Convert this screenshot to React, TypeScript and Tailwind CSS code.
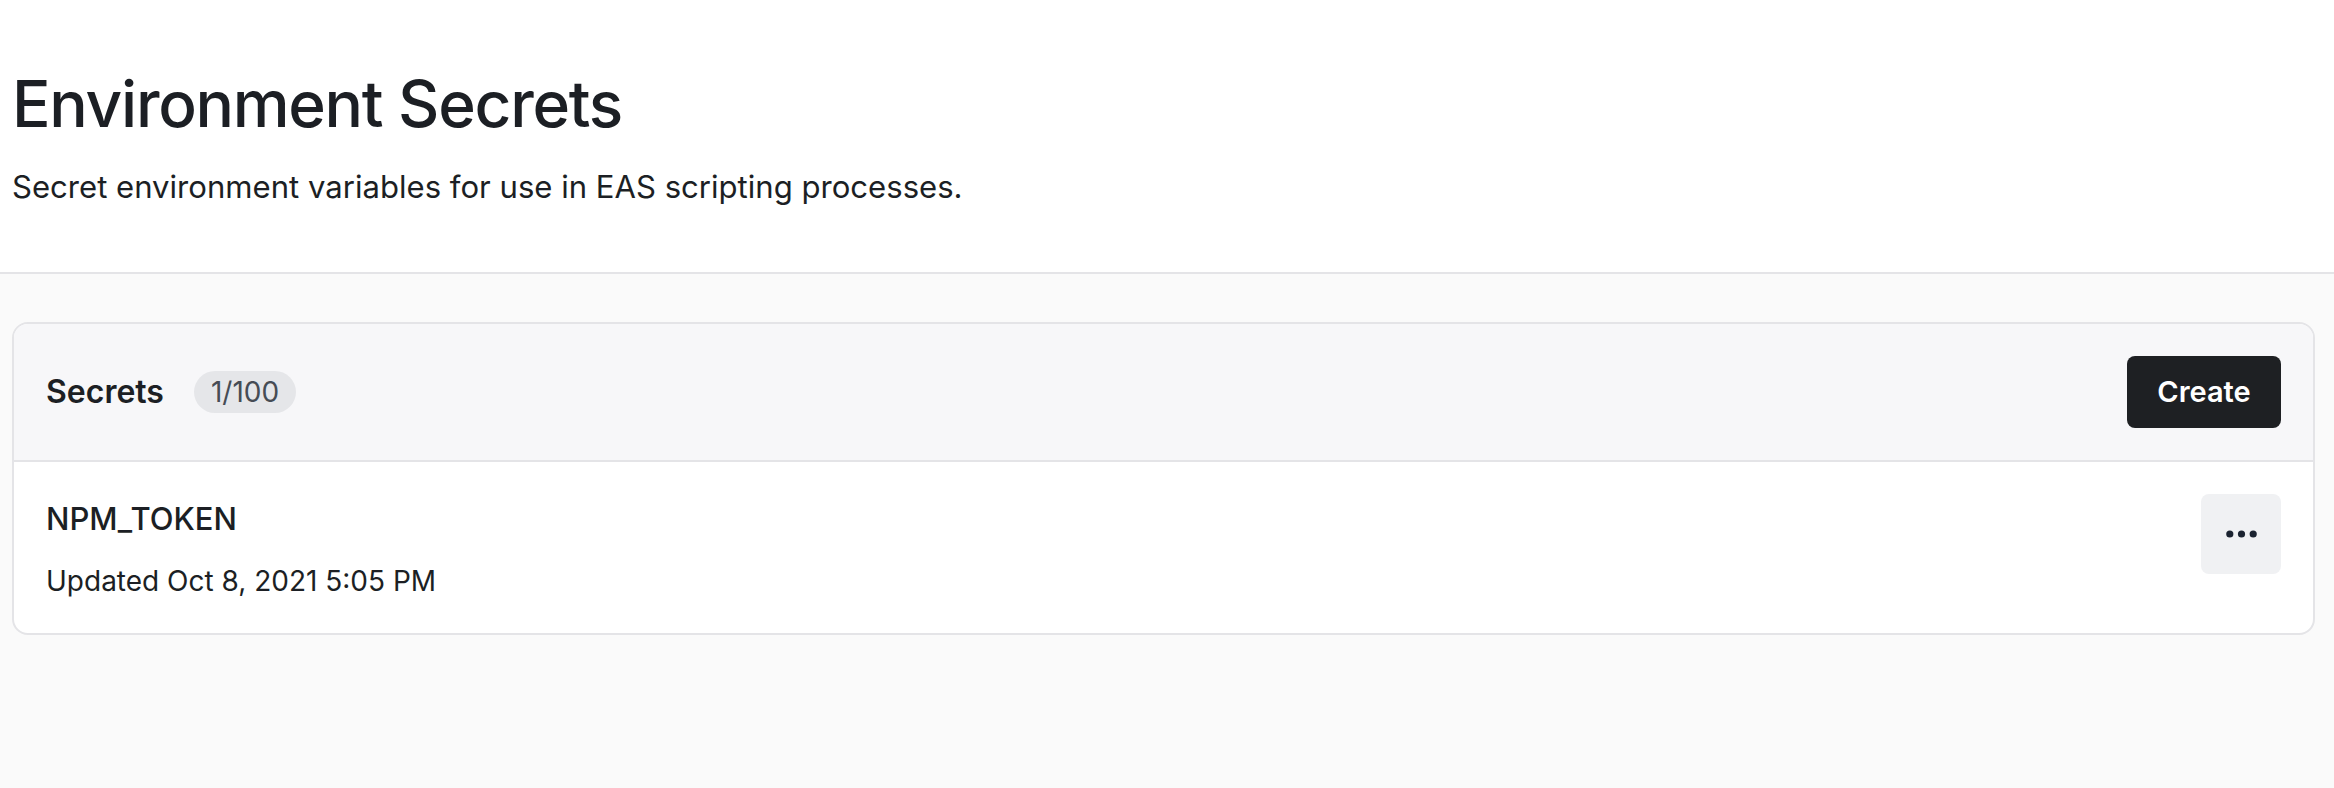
import React from "react";

export default function App() {
  return (
    <div className="min-h-screen bg-[#fafafa] font-['Inter','Noto_Sans',sans-serif] text-[#1c1f24]">
      <header className="bg-white border-b-2 border-[#e4e4e7] pl-[12px] pr-[19px] pt-[63px] pb-[61px]">
        <h1 className="text-[64px] leading-[82px] font-medium tracking-[-0.02em]">
          Environment Secrets
        </h1>
        <p className="mt-[18px] text-[31.1px] leading-[48px] font-normal">
          Secret environment variables for use in EAS scripting processes.
        </p>
      </header>
      <main className="pl-[12px] pr-[19px] pt-[48px]">
        <div className="rounded-[16px] border-2 border-[#e4e4e7] bg-white overflow-hidden">
          <div className="flex items-center justify-between bg-[#f7f7f9] border-b-2 border-[#e4e4e7] px-[32px] py-[32px]">
            <div className="flex items-center gap-[30px]">
              <span className="text-[32px] leading-[48px] font-semibold">Secrets</span>
              <span className="flex items-center h-[42px] px-[17px] rounded-full bg-[#e5e6e9] text-[28px] text-[#464c55]">
                1/100
              </span>
            </div>
            <button className="h-[72px] w-[154px] rounded-[8px] bg-[#1e2023] text-white text-[29px] font-semibold">
              Create
            </button>
          </div>
          <div className="flex items-start justify-between px-[32px] pt-[32px] pb-[28px]">
            <div className="flex flex-col">
              <span className="text-[31px] leading-[50px] font-medium">NPM_TOKEN</span>
              <span className="mt-[13px] text-[28px] leading-[48px]">Updated Oct 8, 2021 5:05 PM</span>
            </div>
            <button className="flex items-center justify-center w-[80px] h-[80px] rounded-[8px] bg-[#f0f1f3]">
              <svg width="31" height="8" viewBox="0 0 31 8" fill="#1b2330">
                <circle cx="3.8" cy="4" r="3.6" />
                <circle cx="15.5" cy="4" r="3.6" />
                <circle cx="27.2" cy="4" r="3.6" />
              </svg>
            </button>
          </div>
        </div>
      </main>
    </div>
  );
}
